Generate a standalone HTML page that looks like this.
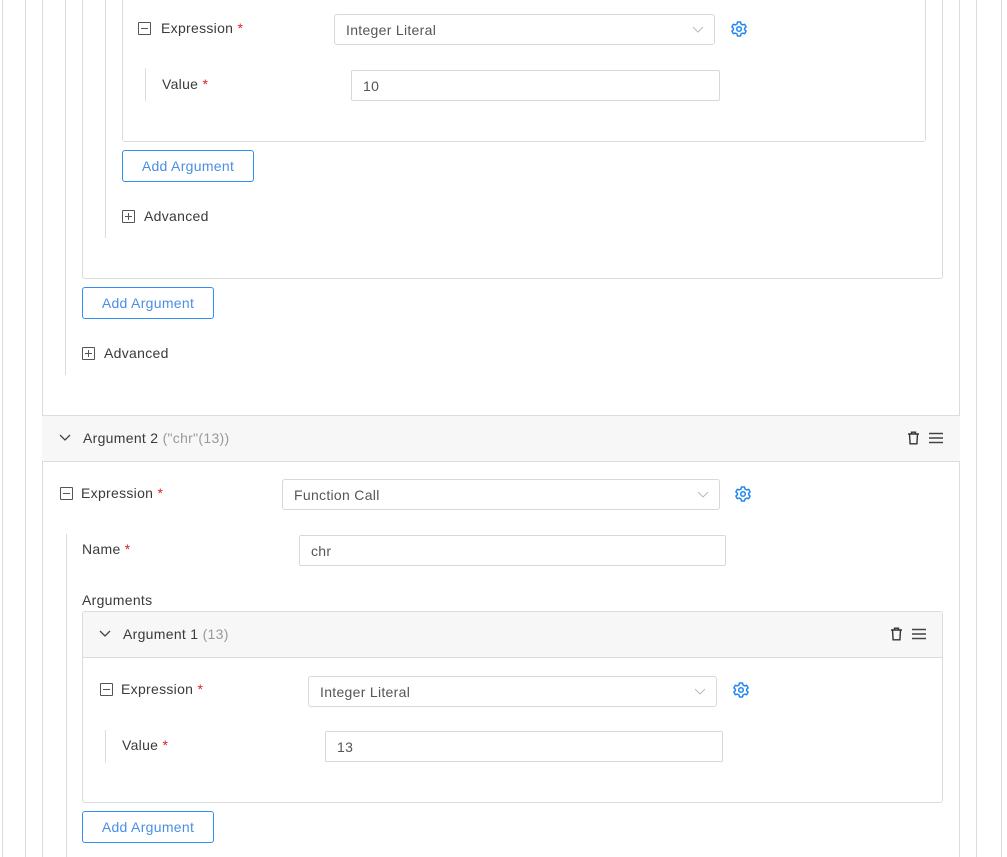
<!DOCTYPE html>
<html><head><meta charset="utf-8"><style>
*{box-sizing:border-box;margin:0;padding:0}
body{width:1007px;height:857px;background:#fff;position:relative;overflow:hidden;font-family:"Liberation Sans",sans-serif;font-size:14px;color:#333;letter-spacing:0.3px}
.a{position:absolute}
.vl{position:absolute;width:1px;background:#dcdcdc}
.box{position:absolute;border:1px solid #dcdcdc;border-radius:3px}
.lbl{position:absolute;line-height:16px;height:16px;margin-top:-8px;color:#3a3a3a;white-space:nowrap}
.lbl b{color:#e02020;font-weight:normal}
.sel{position:absolute;border:1px solid #d8d8d8;border-radius:3px;background:#fff;padding-left:11px;color:#565656;display:flex;align-items:center}
.sel svg{position:absolute;right:10px;top:50%;margin-top:-4px}
.inp{position:absolute;border:1px solid #d8d8d8;border-radius:2px;background:#fff;padding-left:11px;color:#555;display:flex;align-items:center}
.btn{position:absolute;border:1px solid #2f8ff0;border-radius:3px;color:#4a8fe3;display:flex;align-items:center;justify-content:center;width:132px;height:32px}
.ico{position:absolute;width:13px;height:13px;border:1px solid #555;border-radius:1px}
.ico:before{content:"";position:absolute;left:2px;right:2px;top:5px;height:1px;background:#555}
.ico.p:after{content:"";position:absolute;top:2px;bottom:2px;left:5px;width:1px;background:#555}
.hdr{position:absolute;background:#f7f7f7;border-bottom:1px solid #dcdcdc}
.gray{color:#999}
</style></head><body>
<div class="vl" style="left:2px;top:0;height:857px"></div>
<div class="vl" style="left:25px;top:0;height:857px"></div>
<div class="vl" style="left:42px;top:0;height:857px"></div>
<div class="vl" style="left:959px;top:0;height:857px"></div>
<div class="vl" style="left:976px;top:0;height:857px"></div>
<div class="vl" style="left:1001px;top:0;height:857px"></div>
<div class="vl" style="left:65px;top:0;height:375px"></div>
<div class="vl" style="left:105px;top:0;height:238px"></div>

<div class="box" style="left:82px;top:-10px;width:861px;height:289px"></div>
<div class="box" style="left:122px;top:-10px;width:804px;height:152px"></div>

<div class="ico" style="left:138px;top:22px"></div>
<div class="lbl" style="left:161px;top:28px">Expression <b>*</b></div>
<div class="sel" style="left:334px;top:14px;width:381px;height:31px">Integer Literal<svg width="12" height="8"><path d="M1 1l5 5 5-5" fill="none" stroke="#bbb"/></svg></div>
<svg class="a" style="left:730px;top:20px" width="18" height="18" viewBox="0 0 18 18"><path d="M7.5 2h3l.5 2 1.6.9 2-.6 1.5 2.6-1.5 1.4v1.4l1.5 1.4-1.5 2.6-2-.6-1.6.9-.5 2h-3l-.5-2-1.6-.9-2 .6-1.5-2.6 1.5-1.4V8.3L1.9 6.9l1.5-2.6 2 .6L7 4z" fill="none" stroke="#1e88f0" stroke-width="1.5" stroke-linejoin="round"/><circle cx="9" cy="9" r="2.3" fill="none" stroke="#1e88f0" stroke-width="1.5"/></svg>
<div class="vl" style="left:145px;top:68px;height:33px"></div>
<div class="lbl" style="left:162px;top:84px">Value <b>*</b></div>
<div class="inp" style="left:351px;top:70px;width:369px;height:31px">10</div>
<div class="btn" style="left:122px;top:150px">Add Argument</div>
<div class="ico p" style="left:122px;top:210px"></div>
<div class="lbl" style="left:144px;top:216px">Advanced</div>

<div class="btn" style="left:82px;top:287px">Add Argument</div>
<div class="ico p" style="left:82px;top:347px"></div>
<div class="lbl" style="left:104px;top:353px">Advanced</div>

<div class="hdr" style="left:42px;top:415px;width:918px;height:47px;border-top:1px solid #dcdcdc"></div>
<svg class="a" style="left:59px;top:434px" width="12" height="8"><path d="M1 1l5 5 5-5" fill="none" stroke="#444" stroke-width="1.3"/></svg>
<div class="lbl" style="left:83px;top:438px">Argument 2 <span class="gray">("chr"(13))</span></div>
<svg class="a" style="left:907px;top:431px" width="13" height="14" viewBox="0 0 13 14"><path d="M1 3h11M4.5 3V1.2h4V3M2.5 3l.6 9.8h6.8l.6-9.8" fill="none" stroke="#333" stroke-width="1.4"/></svg>
<svg class="a" style="left:929px;top:432px" width="14" height="12"><path d="M0 1.5h14M0 6h14M0 10.5h14" stroke="#444" stroke-width="1.4"/></svg>

<div class="ico" style="left:60px;top:487px"></div>
<div class="lbl" style="left:81px;top:493px">Expression <b>*</b></div>
<div class="sel" style="left:282px;top:479px;width:438px;height:31px">Function Call<svg width="12" height="8"><path d="M1 1l5 5 5-5" fill="none" stroke="#bbb"/></svg></div>
<svg class="a" style="left:734px;top:485px" width="18" height="18" viewBox="0 0 18 18"><path d="M7.5 2h3l.5 2 1.6.9 2-.6 1.5 2.6-1.5 1.4v1.4l1.5 1.4-1.5 2.6-2-.6-1.6.9-.5 2h-3l-.5-2-1.6-.9-2 .6-1.5-2.6 1.5-1.4V8.3L1.9 6.9l1.5-2.6 2 .6L7 4z" fill="none" stroke="#1e88f0" stroke-width="1.5" stroke-linejoin="round"/><circle cx="9" cy="9" r="2.3" fill="none" stroke="#1e88f0" stroke-width="1.5"/></svg>
<div class="vl" style="left:66px;top:534px;height:323px"></div>
<div class="lbl" style="left:82px;top:549px">Name <b>*</b></div>
<div class="inp" style="left:299px;top:535px;width:427px;height:31px">chr</div>
<div class="lbl" style="left:82px;top:600px">Arguments</div>

<div class="box" style="left:82px;top:611px;width:861px;height:192px;overflow:hidden"><div class="hdr" style="left:0;top:0;width:861px;height:46px"></div></div>
<svg class="a" style="left:99px;top:630px" width="12" height="8"><path d="M1 1l5 5 5-5" fill="none" stroke="#444" stroke-width="1.3"/></svg>
<div class="lbl" style="left:123px;top:634px">Argument 1 <span class="gray">(13)</span></div>
<svg class="a" style="left:890px;top:627px" width="13" height="14" viewBox="0 0 13 14"><path d="M1 3h11M4.5 3V1.2h4V3M2.5 3l.6 9.8h6.8l.6-9.8" fill="none" stroke="#333" stroke-width="1.4"/></svg>
<svg class="a" style="left:912px;top:628px" width="14" height="12"><path d="M0 1.5h14M0 6h14M0 10.5h14" stroke="#444" stroke-width="1.4"/></svg>

<div class="ico" style="left:100px;top:683px"></div>
<div class="lbl" style="left:121px;top:689px">Expression <b>*</b></div>
<div class="sel" style="left:308px;top:676px;width:409px;height:31px">Integer Literal<svg width="12" height="8"><path d="M1 1l5 5 5-5" fill="none" stroke="#bbb"/></svg></div>
<svg class="a" style="left:732px;top:681px" width="18" height="18" viewBox="0 0 18 18"><path d="M7.5 2h3l.5 2 1.6.9 2-.6 1.5 2.6-1.5 1.4v1.4l1.5 1.4-1.5 2.6-2-.6-1.6.9-.5 2h-3l-.5-2-1.6-.9-2 .6-1.5-2.6 1.5-1.4V8.3L1.9 6.9l1.5-2.6 2 .6L7 4z" fill="none" stroke="#1e88f0" stroke-width="1.5" stroke-linejoin="round"/><circle cx="9" cy="9" r="2.3" fill="none" stroke="#1e88f0" stroke-width="1.5"/></svg>
<div class="vl" style="left:105px;top:730px;height:33px"></div>
<div class="lbl" style="left:122px;top:745px">Value <b>*</b></div>
<div class="inp" style="left:325px;top:731px;width:398px;height:31px">13</div>
<div class="btn" style="left:82px;top:811px">Add Argument</div>
</body></html>
